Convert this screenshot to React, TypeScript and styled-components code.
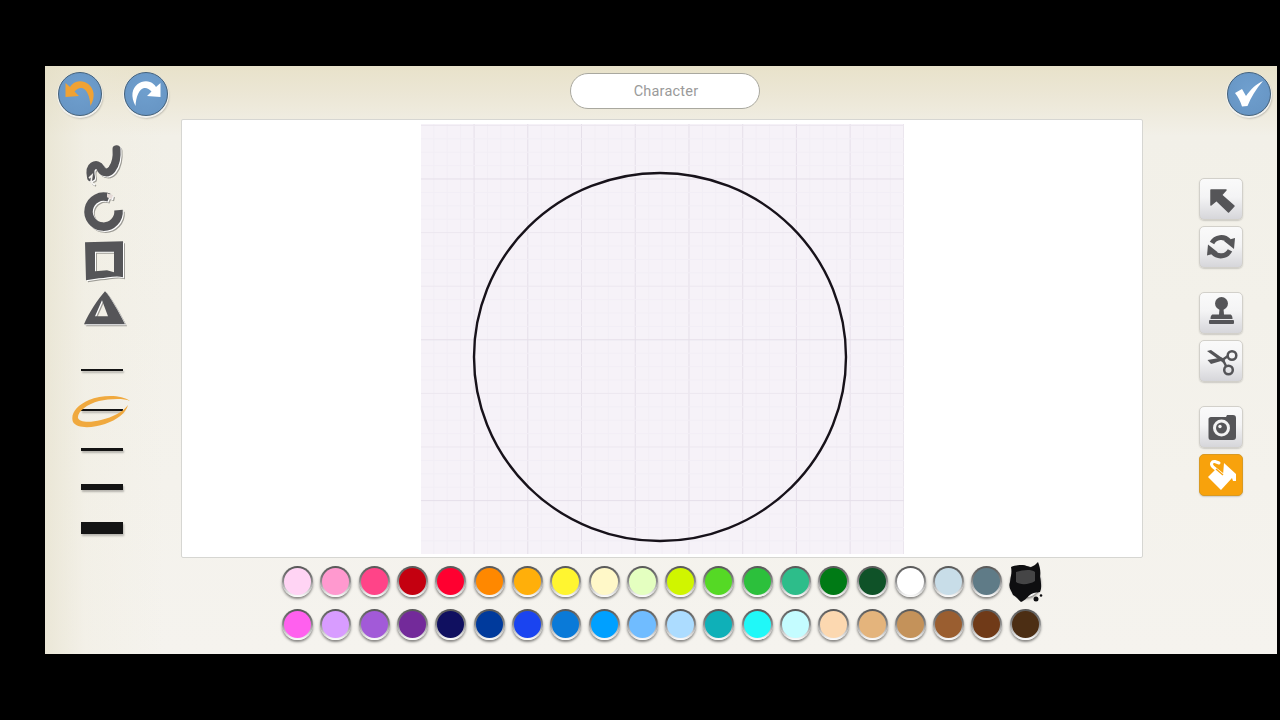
import React from 'react';
import styled, { createGlobalStyle } from 'styled-components';

const Global = createGlobalStyle`
  html, body { margin: 0; padding: 0; background: #000; }
  #root { width: 1280px; height: 720px; overflow: hidden; background: #000; }
`;

const Page = styled.div`
  width: 1280px;
  height: 720px;
  padding: 66px 3px 66px 45px;
  box-sizing: border-box;
  background: #000;
`;

const Board = styled.main`
  width: 1232px;
  height: 588px;
  display: grid;
  grid-template-columns: 136px 962px 134px;
  grid-template-rows: 53px 439px 96px;
  background:
    linear-gradient(90deg, rgba(228,223,200,.6) 0, rgba(238,234,218,.3) 40px, rgba(245,243,238,0) 120px),
    linear-gradient(180deg, #e8e2ca 0, #ece7d6 30px, #f2f0e8 70px, #f5f3ee 100%);
`;

const TopBar = styled.header`
  grid-column: 1 / 4;
  display: grid;
  grid-template-columns: 512px 190px 1fr;
  padding: 6px 6px 0 13px;
  align-items: start;
`;

const RoundGroup = styled.div`
  display: flex;
  gap: 22px;
`;

const RoundButton = styled.div`
  width: 44px;
  height: 44px;
  box-sizing: border-box;
  border-radius: 50%;
  background: radial-gradient(circle at 50% 40%, #6f9fce, #6593c2);
  border: 1.5px solid #41607c;
  box-shadow: 0 1px 0 1px #f2f2ef, 1px 2.5px 2px rgba(0,0,0,.25);
  display: flex;
  align-items: center;
  justify-content: center;
  flex: none;
  & svg { display: block; }
`;

const ConfirmSlot = styled.div`
  display: flex;
  justify-content: flex-end;
`;

const TitlePill = styled.div`
  height: 36px;
  margin-top: 1px;
  padding-left: 2px;
  box-sizing: border-box;
  border: 1px solid #a9a89f;
  border-radius: 18px;
  background: #fff;
  display: flex;
  align-items: center;
  justify-content: center;
  font: 400 14.5px Roboto, "Liberation Sans", sans-serif;
  letter-spacing: .2px;
  color: #9a9a9a;
`;

const LeftColumn = styled.nav`
  display: flex;
  flex-direction: column;
  padding: 20px 0 0 34px;
`;

const StrokeIcon = styled.svg`
  display: block;
  width: 50px;
  height: 48.3px;
  flex: none;
  filter: drop-shadow(1px 1.5px 0 #fff) drop-shadow(1px 1px .7px rgba(0,0,0,.35));
`;

const LineList = styled.div`
  display: flex;
  flex-direction: column;
  margin-top: 18.5px;
`;

const LineRow = styled.div`
  position: relative;
  height: 39.5px;
  padding-left: 2px;
  display: flex;
  align-items: center;
`;

const LineSample = styled.div<{ $h: number; $lift?: number }>`
  width: 42px;
  height: ${p => p.$h}px;
  margin-bottom: ${p => p.$lift ?? 0}px;
  background: #141414;
  box-shadow: 1px 2px 2px rgba(0,0,0,.25);
`;

const SelectedRing = styled.svg`
  position: absolute;
  left: -8px;
  top: 2.5px;
  width: 62px;
  height: 36px;
`;

const Canvas = styled.section`
  box-sizing: border-box;
  border: 1.5px solid #d6d6d2;
  border-radius: 2px;
  background: #fff;
  padding: 4px 0 3px 238.5px;
  & svg { display: block; }
`;

const RightColumn = styled.aside`
  display: flex;
  flex-direction: column;
  gap: 24px;
  padding: 59px 0 0 56px;
`;

const ToolGroup = styled.div`
  display: flex;
  flex-direction: column;
  gap: 6px;
`;

const ToolButton = styled.div<{ $active?: boolean }>`
  width: 44px;
  height: 42px;
  box-sizing: border-box;
  border-radius: 5px;
  border: 1.5px solid ${p => (p.$active ? '#d99a22' : '#d2d0ca')};
  background: ${p => (p.$active ? '#f8a20c' : 'linear-gradient(180deg, #fafafa 0, #f4f4f5 45%, #d6d6da 100%)')};
  box-shadow: 0 1px 1.5px rgba(0,0,0,.16);
  & svg { display: block; margin: -1.5px; }
`;

const Palette = styled.section`
  grid-column: 2;
  display: grid;
  grid-template-columns: repeat(20, 38.3px);
  grid-auto-rows: 43px;
  padding: 8px 0 0 97.5px;
`;

const SwatchCell = styled.div`
  position: relative;
  display: flex;
  align-items: center;
  justify-content: center;
  height: 31px;
`;

const SwatchRing = styled.div`
  width: 31px;
  height: 31px;
  box-sizing: border-box;
  padding: 2px;
  border-radius: 50%;
  background: linear-gradient(180deg, #565656 0, #848484 45%, #e0e0e0 85%, #fff 100%);
  box-shadow: 0 2px 2.5px rgba(0,0,0,.45);
`;

const SwatchFill = styled.div<{ $color: string }>`
  width: 100%;
  height: 100%;
  border-radius: 50%;
  background: ${p => p.$color};
`;

const InkBlob = styled.svg`
  position: absolute;
  left: 3px;
  top: -4px;
  width: 34px;
  height: 40px;
`;

const rowA = ['#ffd4f4', '#ff99cf', '#ff4488', '#c40010', '#ff0030', '#ff8800', '#ffaf0a', '#fff530', '#fff8c8', '#e4ffc0', '#d0f500', '#55d925', '#2cc03c', '#2dbd8a', '#007a15', '#0f5228', '#ffffff', '#c8dde8', '#5f7b87'];
const rowB = ['#ff60ee', '#d89cff', '#a25ad8', '#732a9a', '#101060', '#003a9c', '#1a44f0', '#0a7ad8', '#00a0ff', '#70bcff', '#acdcff', '#0fb0b8', '#20f8f8', '#c4fcff', '#fcd8b0', '#e4b47c', '#c4925a', '#9a5e30', '#703a18', '#4c2e14'];

const GRAY = '#555558';
const ARROW = 'M7.5 11 L7.5 25 L21 24 L16.5 19.5 C19 17 21 15.5 24 16 C29 17 32 25 32.5 34 C35 29 36 25 35.5 21 C34 12 25 7.5 18 10 C15.5 11 13.5 12.5 12 15 Z';

const UndoArrow = ({ color }: { color: string }) => (
  <svg width="44" height="44" viewBox="0 0 44 44" style={{ margin: -1.5 }}>
    <path d={ARROW} fill={color} />
  </svg>
);

const RedoArrow = () => (
  <svg width="44" height="44" viewBox="0 0 44 44" style={{ margin: -1.5 }}>
    <path transform="translate(44 0) scale(-1 1)" d={ARROW} fill="#fff" />
  </svg>
);

const Check = () => (
  <svg width="44" height="44" viewBox="0 0 44 44" style={{ margin: -1.5 }}>
    <path d="M8 21 L15 17 L19 24 C24 17 29 12 36 9 C29 17 24 25 20.5 34 L15 34.5 C13.5 29 11 25 8 21 Z" fill="#fff" />
  </svg>
);

const ToolIcons = {
  squiggle: (
    <StrokeIcon viewBox="0 0 50 48">
      <g transform="translate(0 2)">
        <path d="M37.5 8 C38 14 37.5 22 33 28 C29 33 24 32 21.5 27 C20 24 17 23 14 25 C11 27 11 31 12 36" fill="none" stroke={GRAY} strokeWidth="8" strokeLinecap="round" />
        <path d="M10 37 L13 34 L12 41 L15 43" fill="none" stroke="#f4f2ee" strokeWidth="1.6" />
      </g>
    </StrokeIcon>
  ),
  circle: (
    <StrokeIcon viewBox="0 0 50 48">
      <path d="M30 10.5 A15 15 0 1 0 39.5 23" fill="none" stroke={GRAY} strokeWidth="8.5" />
      <path d="M28 6 L34 8 L33 12 L28 10 Z" fill="#e6dcd8" />
    </StrokeIcon>
  ),
  square: (
    <StrokeIcon viewBox="0 0 50 48">
      <path d="M6 6 L44 5 L44 41 C36 39 28 42 20 42 L7 44 Z M16 15.5 L16 35 L28 34 L35 36 L35 15.5 Z" fill={GRAY} fillRule="evenodd" />
    </StrokeIcon>
  ),
  triangle: (
    <StrokeIcon viewBox="0 0 50 48">
      <path d="M26 7 C31 12 40 28 46 40 L5 40 C10 28 19 15 26 7 Z M23 16 L16 32 L29 32 Z" fill={GRAY} fillRule="evenodd" />
    </StrokeIcon>
  ),
};

const ArrowGlyph = () => (
  <svg width="44" height="42" viewBox="0 0 44 42">
    <path d="M12 12 L27 12 L22.5 17 L35 28 L29.5 34 L17.5 22.5 L12 27 Z" fill={GRAY} stroke={GRAY} strokeWidth="1.5" strokeLinejoin="round" />
  </svg>
);

const RefreshGlyph = () => (
  <svg width="44" height="42" viewBox="0 0 44 42">
    <path d="M13 17 A10.5 10.5 0 0 1 30 15" fill="none" stroke={GRAY} strokeWidth="5" />
    <path d="M25 15 L36 12 L35 23 Z" fill={GRAY} />
    <path d="M31 24.4 A10.5 10.5 0 0 1 14 26.4" fill="none" stroke={GRAY} strokeWidth="5" />
    <path d="M19 26.4 L8 29.4 L9 18.4 Z" fill={GRAY} />
  </svg>
);

const StampGlyph = () => (
  <svg width="44" height="42" viewBox="0 0 44 42" fill={GRAY}>
    <circle cx="22.5" cy="11.5" r="6.5" />
    <path d="M20.5 16 H24.5 L25 23 H20 Z" />
    <path d="M14 22.5 H31 C33 22.5 33.5 25 33.5 27 H11.5 C11.5 25 12 22.5 14 22.5 Z" />
    <rect x="10" y="28" width="25" height="4" rx="1" />
  </svg>
);

const ScissorsGlyph = () => (
  <svg width="44" height="42" viewBox="0 0 44 42">
    <path d="M8 11 L12 10 L26 20 L24.5 23 Z" fill={GRAY} />
    <path d="M8.5 20 L23 17.5 L25.5 20 L12 24 Z" fill={GRAY} />
    <path d="M24 19.5 L29 16 M24 20 L27 26" stroke={GRAY} strokeWidth="2.5" />
    <circle cx="33" cy="15.5" r="4.3" fill="none" stroke={GRAY} strokeWidth="2.5" />
    <circle cx="29.5" cy="30" r="4.3" fill="none" stroke={GRAY} strokeWidth="2.5" />
  </svg>
);

const CameraGlyph = () => (
  <svg width="44" height="42" viewBox="0 0 44 42">
    <path d="M12 11 H27 L28 9 H34 C36 9 37 10 37 12 V31 C37 33 36 34 34 34 H12 C10 34 9.5 33 9.5 31 V13 C9.5 12 10.5 11 12 11 Z" fill={GRAY} />
    <circle cx="22.5" cy="22" r="8.5" fill="#f2f2f2" />
    <circle cx="22.5" cy="22" r="5.5" fill={GRAY} />
    <circle cx="21" cy="20.5" r="1.7" fill="#f2f2f2" />
  </svg>
);

const BucketGlyph = () => (
  <svg width="44" height="42" viewBox="0 0 44 42">
    <path d="M9 23 L17 15 L24 21 L25 9 L37 20 L37 27 L34 27 L33 24 L22 36 Z" fill="#fff" />
    <path d="M24 21 L14 13 C11 10 13 7 16 7.5 L20 9" fill="none" stroke="#fff" strokeWidth="3" strokeLinecap="round" />
    <path d="M17 15 L24 21" stroke="#f8a20c" strokeWidth="1.4" />
  </svg>
);

const CanvasDrawing = () => {
  const xs = Array.from({ length: 36 }, (_, i) => 0.5 + 12.3 + i * 13.43);
  const ys = Array.from({ length: 32 }, (_, i) => 0.5 + 0.9 + i * 13.4);
  return (
    <svg width="483" height="430" viewBox="0 0 483 430">
      <rect width="483" height="430" fill="#f6f2f8" />
      {xs.map((x, i) => (
        <line key={`v${i}`} x1={x} x2={x} y1="0" y2="430" stroke={(i - 3) % 4 === 0 ? '#e5dfe9' : '#f2eef5'} strokeWidth="1" />
      ))}
      {ys.map((y, i) => (
        <line key={`h${i}`} x1="0" x2="483" y1={y} y2={y} stroke={(i - 4) % 12 === 0 ? '#e5dfe9' : (i - 4) % 4 === 0 ? '#ece7ef' : '#f2eef5'} strokeWidth="1" />
      ))}
      <ellipse cx="239" cy="233" rx="186" ry="184" fill="none" stroke="#17121a" strokeWidth="2.4" />
    </svg>
  );
};

const lines = [2, 2, 3, 6, 12];

export default function App() {
  return (
    <Page>
      <Global />
      <Board>
        <TopBar>
          <RoundGroup>
            <RoundButton><UndoArrow color="#f0a234" /></RoundButton>
            <RoundButton><RedoArrow /></RoundButton>
          </RoundGroup>
          <TitlePill>Character</TitlePill>
          <ConfirmSlot>
            <RoundButton><Check /></RoundButton>
          </ConfirmSlot>
        </TopBar>

        <LeftColumn>
          {ToolIcons.squiggle}
          {ToolIcons.circle}
          {ToolIcons.square}
          {ToolIcons.triangle}
          <LineList>
            {lines.map((h, i) => (
              <LineRow key={i}>
                <LineSample $h={h} $lift={i === 3 ? 3 : 0} />
                {i === 1 && (
                  <SelectedRing viewBox="0 0 62 36">
                    <path d="M59 8 C50 1 30 2 18 7 C6 12 -1 21 2 29 C6 36 22 35 34 31 C46 27 55 20 57 12 C52 19 42 24 30 27 C18 30 8 29 7 25 C6 19 16 11 28 8 C38 6 52 5 59 8 Z" fill="#f0a93e" />
                  </SelectedRing>
                )}
              </LineRow>
            ))}
          </LineList>
        </LeftColumn>

        <Canvas>
          <CanvasDrawing />
        </Canvas>

        <RightColumn>
          <ToolGroup>
            <ToolButton><ArrowGlyph /></ToolButton>
            <ToolButton><RefreshGlyph /></ToolButton>
          </ToolGroup>
          <ToolGroup>
            <ToolButton><StampGlyph /></ToolButton>
            <ToolButton><ScissorsGlyph /></ToolButton>
          </ToolGroup>
          <ToolGroup>
            <ToolButton><CameraGlyph /></ToolButton>
            <ToolButton $active><BucketGlyph /></ToolButton>
          </ToolGroup>
        </RightColumn>

        <Palette>
          {rowA.map(c => (
            <SwatchCell key={c}>
              <SwatchRing><SwatchFill $color={c} /></SwatchRing>
            </SwatchCell>
          ))}
          <SwatchCell>
            <SwatchRing><SwatchFill $color="#1a1a1c" /></SwatchRing>
            <InkBlob viewBox="0 0 34 40">
              <path d="M2 5 C6 3 10 3 14 3 C17 3 20 6 22 5 C25 4 27 2 29 0 C31 5 32 10 31 15 C32 20 33 26 31 30 C28 31 24 30 21 33 C18 35 17 38 12 40 C9 38 8 35 4 33 C2 28 -1 25 1 20 C2 14 3 10 2 5 Z" fill="#0e0e10" />
              <circle cx="27" cy="37" r="2.5" fill="#0e0e10" />
              <circle cx="32" cy="33.5" r="1.3" fill="#0e0e10" />
              <path d="M7 10 C14 8 22 7 26 10 L26 19 C20 23 11 23 7 20 Z" fill="#5c5c5e" opacity=".7" />
            </InkBlob>
          </SwatchCell>
          {rowB.map(c => (
            <SwatchCell key={c}>
              <SwatchRing><SwatchFill $color={c} /></SwatchRing>
            </SwatchCell>
          ))}
        </Palette>
      </Board>
    </Page>
  );
}
